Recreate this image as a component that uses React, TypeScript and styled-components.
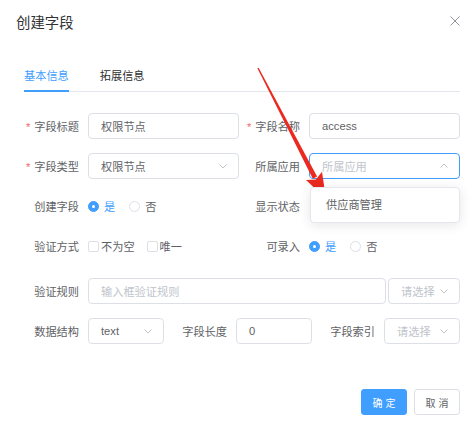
import * as React from 'react';
import styled, { createGlobalStyle } from 'styled-components';

const GlobalStyle = createGlobalStyle`
  html, body {
    margin: 0;
    padding: 0;
    background: #fff;
  }
  body {
    font-family: "Liberation Sans", "Noto Sans CJK SC", sans-serif;
    color: #606266;
  }
  * {
    box-sizing: border-box;
  }
`;

const Chevron: React.FC<{ up?: boolean }> = ({ up }) => (
  <svg width="10" height="10" viewBox="0 0 10 10" style={{ transform: up ? 'rotate(180deg)' : undefined }}>
    <path d="M1.5 3.5 L5 7 L8.5 3.5" fill="none" stroke="#c0c4cc" strokeWidth="1" />
  </svg>
);

const Arrow: React.FC = () => {
  // annotation arrow laid over the dialog
  const sx = 258;
  const sy = 68;
  const tx = 326;
  const ty = 199;
  const len = Math.hypot(tx - sx, ty - sy);
  const ux = (tx - sx) / len;
  const uy = (ty - sy) / len;
  const px = uy;
  const py = -ux;
  const headLen = 26;
  const headHalf = 9;
  const bx = tx - ux * headLen;
  const by = ty - uy * headLen;
  const pts = (list: number[][]) => list.map((p) => p.map((v) => v.toFixed(1)).join(',')).join(' ');
  const shaft = pts([
    [sx + px * 0.7, sy + py * 0.7],
    [bx + ux * 2 + px * 2.4, by + uy * 2 + py * 2.4],
    [bx + ux * 2 - px * 2.4, by + uy * 2 - py * 2.4],
    [sx - px * 0.7, sy - py * 0.7],
  ]);
  const head = pts([
    [tx, ty],
    [bx + px * headHalf, by + py * headHalf],
    [bx + ux * 4, by + uy * 4],
    [bx - px * headHalf, by - py * headHalf],
  ]);
  return (
    <Overlay width="474" height="431" viewBox="0 0 474 431">
      <polygon points={shaft} fill="#ea2a20" />
      <polygon points={head} fill="#ea2a20" />
    </Overlay>
  );
};

const App: React.FC = () => (
  <>
    <GlobalStyle />
    <Dialog>
      <Header>
        <Title>创建字段</Title>
        <svg width="10" height="10" viewBox="0 0 10 10">
          <path d="M0.5 0.5 L9.5 9.5 M9.5 0.5 L0.5 9.5" stroke="#909399" strokeWidth="1" />
        </svg>
      </Header>
      <Body>
        <TabBar>
          <Tab active>基本信息</Tab>
          <Tab>拓展信息</Tab>
        </TabBar>
        <Form>
          <Row>
            <Item>
              <Label required>字段标题</Label>
              <Input>权限节点</Input>
            </Item>
            <Item>
              <Label required>字段名称</Label>
              <Input>access</Input>
            </Item>
          </Row>
          <Row>
            <Item>
              <Label required>字段类型</Label>
              <Select>
                <span>权限节点</span>
                <Chevron />
              </Select>
            </Item>
            <Item>
              <Label>所属应用</Label>
              <Anchor>
                <Select focused>
                  <Placeholder>所属应用</Placeholder>
                  <Chevron up />
                </Select>
                <Dropdown>
                  <Option>供应商管理</Option>
                </Dropdown>
              </Anchor>
            </Item>
          </Row>
          <Row>
            <Item>
              <Label>创建字段</Label>
              <Choices>
                <Choice>
                  <Radio checked />
                  <ChoiceText checked>是</ChoiceText>
                </Choice>
                <Choice>
                  <Radio />
                  <ChoiceText>否</ChoiceText>
                </Choice>
              </Choices>
            </Item>
            <Item>
              <Label>显示状态</Label>
            </Item>
          </Row>
          <Row>
            <Item>
              <Label>验证方式</Label>
              <Choices wide>
                <Choice tight>
                  <Checkbox />
                  <ChoiceText>不为空</ChoiceText>
                </Choice>
                <Choice tight>
                  <Checkbox />
                  <ChoiceText>唯一</ChoiceText>
                </Choice>
              </Choices>
            </Item>
            <Item>
              <Label>可录入</Label>
              <Choices>
                <Choice>
                  <Radio checked />
                  <ChoiceText checked>是</ChoiceText>
                </Choice>
                <Choice>
                  <Radio />
                  <ChoiceText>否</ChoiceText>
                </Choice>
              </Choices>
            </Item>
          </Row>
          <SingleRow spaced>
            <Label>验证规则</Label>
            <Input>
              <Placeholder>输入框验证规则</Placeholder>
            </Input>
            <Select width={72}>
              <Placeholder>请选择</Placeholder>
              <Chevron />
            </Select>
          </SingleRow>
          <TripleRow>
            <Item>
              <Label>数据结构</Label>
              <Select>
                <span>text</span>
                <Chevron />
              </Select>
            </Item>
            <Item>
              <Label>字段长度</Label>
              <Input>0</Input>
            </Item>
            <Item>
              <Label>字段索引</Label>
              <Select>
                <Placeholder>请选择</Placeholder>
                <Chevron />
              </Select>
            </Item>
          </TripleRow>
        </Form>
        <Footer>
          <Button primary>确 定</Button>
          <Button>取 消</Button>
        </Footer>
      </Body>
      <Arrow />
    </Dialog>
  </>
);

export default App;

const Dialog = styled.div`
  position: relative;
  width: 474px;
  height: 431px;
  background: #fff;
  overflow: hidden;
`;

const Overlay = styled.svg`
  position: absolute;
  left: 0;
  top: 0;
  pointer-events: none;
`;

const Header = styled.div`
  height: 42px;
  display: flex;
  align-items: center;
  justify-content: space-between;
  padding: 0 14px 0 16px;
`;

const Title = styled.span`
  font-size: 14.4px;
  color: #303133;
`;

const Body = styled.div`
  padding: 0 14px 0 24px;
`;

const TabBar = styled.div`
  position: relative;
  display: flex;
  margin-top: 20px;
  height: 30px;

  &::after {
    content: '';
    position: absolute;
    left: 0;
    right: 0;
    bottom: 0;
    height: 1px;
    background: #e4e7ed;
  }
`;

const Tab = styled.div<{ active?: boolean }>`
  position: relative;
  z-index: 1;
  height: 30px;
  line-height: 28px;
  padding: 0 16px;
  font-size: 11.2px;
  color: ${(p) => (p.active ? '#409eff' : '#303133')};
  border-bottom: 2px solid ${(p) => (p.active ? '#409eff' : 'transparent')};

  &:first-child {
    padding-left: 0;
    padding-right: 0;
    margin-right: 15px;
  }
`;

const Form = styled.div`
  margin-top: 21px;
  display: flex;
  flex-direction: column;
  gap: 14px;
`;

const Row = styled.div`
  display: grid;
  grid-template-columns: 1fr 1fr;
  column-gap: 6px;
`;

const TripleRow = styled.div`
  display: grid;
  grid-template-columns: 1fr 1fr 1fr;
  column-gap: 8px;
`;

const Item = styled.div`
  display: flex;
  align-items: center;
  height: 26px;
  min-width: 0;
`;

const SingleRow = styled.div<{ spaced?: boolean }>`
  display: flex;
  align-items: center;
  height: 26px;
  gap: 2px;
  margin-top: ${(p) => (p.spaced ? '5px' : '0')};

  & > label {
    margin-right: -2px;
  }
`;

const Label = styled.label<{ required?: boolean }>`
  flex-shrink: 0;
  width: 64px;
  padding-right: 9px;
  text-align: right;
  font-size: 11.2px;
  color: #606266;
  white-space: nowrap;

  &::before {
    content: ${(p) => (p.required ? "'*'" : 'none')};
    color: #f56c6c;
    margin-right: 4px;
  }
`;

const Input = styled.div`
  flex: 1;
  min-width: 0;
  height: 26px;
  display: flex;
  align-items: center;
  padding: 0 12px;
  border: 1px solid #dcdfe6;
  border-radius: 4px;
  font-size: 11.2px;
  color: #606266;
  background: #fff;
`;

const Select = styled.div<{ focused?: boolean; width?: number }>`
  flex: ${(p) => (p.width ? `0 0 ${p.width}px` : '1')};
  min-width: 0;
  height: 26px;
  display: flex;
  align-items: center;
  justify-content: space-between;
  padding: 0 10px 0 12px;
  border: 1px solid ${(p) => (p.focused ? '#409eff' : '#dcdfe6')};
  border-radius: 4px;
  font-size: 11.2px;
  color: #606266;
  background: #fff;
  white-space: nowrap;
`;

const Placeholder = styled.span`
  color: #c0c4cc;
`;

const Anchor = styled.div`
  position: relative;
  flex: 1;
  display: flex;
`;

const Dropdown = styled.div`
  position: absolute;
  top: calc(100% + 8px);
  left: 1px;
  right: 0;
  padding: 4px 0;
  background: #fff;
  border: 1px solid #e4e7ed;
  border-radius: 4px;
  box-shadow: 0 2px 12px 0 rgba(0, 0, 0, 0.1);
  z-index: 2;
`;

const Option = styled.div`
  height: 26px;
  line-height: 26px;
  padding: 0 15px;
  font-size: 11.2px;
  color: #606266;
`;

const Choices = styled.div<{ wide?: boolean }>`
  display: flex;
  align-items: center;
  gap: ${(p) => (p.wide ? '12px' : '14px')};
`;

const Choice = styled.div<{ tight?: boolean }>`
  display: flex;
  align-items: center;
  gap: ${(p) => (p.tight ? '2px' : '5px')};
`;

const Radio = styled.span<{ checked?: boolean }>`
  position: relative;
  width: 11px;
  height: 11px;
  border-radius: 50%;
  border: 1px solid ${(p) => (p.checked ? '#409eff' : '#dcdfe6')};
  background: ${(p) => (p.checked ? '#409eff' : '#fff')};

  &::after {
    content: '';
    display: ${(p) => (p.checked ? 'block' : 'none')};
    position: absolute;
    left: 50%;
    top: 50%;
    width: 3px;
    height: 3px;
    margin: -1.5px 0 0 -1.5px;
    border-radius: 50%;
    background: #fff;
  }
`;

const Checkbox = styled.span`
  width: 11px;
  height: 11px;
  border: 1px solid #dcdfe6;
  border-radius: 2px;
  background: #fff;
`;

const ChoiceText = styled.span<{ checked?: boolean }>`
  font-size: 11.2px;
  color: ${(p) => (p.checked ? '#409eff' : '#606266')};
`;

const Footer = styled.div`
  display: flex;
  justify-content: flex-end;
  gap: 7px;
  margin-top: 45px;
`;

const Button = styled.button<{ primary?: boolean }>`
  width: 46px;
  height: 26px;
  padding: 0;
  border-radius: 3px;
  border: 1px solid ${(p) => (p.primary ? '#409eff' : '#dcdfe6')};
  background: ${(p) => (p.primary ? '#409eff' : '#fff')};
  color: ${(p) => (p.primary ? '#fff' : '#606266')};
  font-family: inherit;
  font-size: 10px;
`;
